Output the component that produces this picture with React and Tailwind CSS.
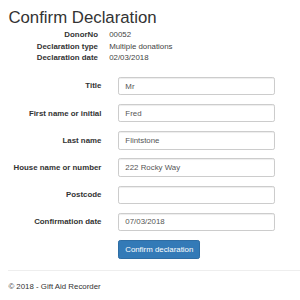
import React from 'react'

const fields = [
  { label: 'Title', value: 'Mr' },
  { label: 'First name or initial', value: 'Fred' },
  { label: 'Last name', value: 'Flintstone' },
  { label: 'House name or number', value: '222 Rocky Way' },
  { label: 'Postcode', value: '' },
  { label: 'Confirmation date', value: '07/03/2018' },
]

const details = [
  ['DonorNo', '00052'],
  ['Declaration type', 'Multiple donations'],
  ['Declaration date', '02/03/2018'],
]

const App = () => {
  return (
    <div className="w-[300px] h-[300px] overflow-hidden bg-white pl-[8.4px] text-[#333] text-[7.875px] leading-[11.25px]" style={{ fontFamily: '"Liberation Sans", Arial, sans-serif' }}>
      <h2 className="mt-[9px] mb-[1.75px] text-[16.8px] leading-[18.5px] font-normal">Confirm Declaration</h2>

      <dl className="flex flex-col">
        {details.map(([k, v]) => (
          <div key={k} className="flex flex-row leading-[11.5px]">
            <dt className="w-[89.6px] text-right font-bold">{k}</dt>
            <dd className="ml-[11.2px] text-[#444]">{v}</dd>
          </div>
        ))}
      </dl>

      <form className="mt-[13px] flex flex-col gap-[8.7px] pr-[25px]">
        {fields.map((f) => (
          <div key={f.label} className="flex flex-row items-center">
            <label className="w-[93.1px] text-right font-bold">{f.label}</label>
            <input
              readOnly
              value={f.value}
              className="ml-[16.8px] w-[157px] h-[18.5px] px-[6.2px] border border-[#ccc] rounded-[2.2px] text-[#555] text-[7.875px] shadow-[inset_0_1px_1px_rgba(0,0,0,0.075)] outline-none"
              style={{ fontFamily: '"Liberation Sans", Arial, sans-serif' }}
            />
          </div>
        ))}
        <div className="flex flex-row">
          <button type="button" className="ml-[109.9px] w-[82px] h-[19px] bg-[#337ab7] border border-[#2e6da4] rounded-[2.2px] text-white text-[7.875px]">
            Confirm declaration
          </button>
        </div>
      </form>

      <hr className="mt-[11px] border-0 border-t border-[#eee]" />
      <footer className="mt-[10.5px]">
        <p>© 2018 - Gift Aid Recorder</p>
      </footer>
    </div>
  )
}

export default App
